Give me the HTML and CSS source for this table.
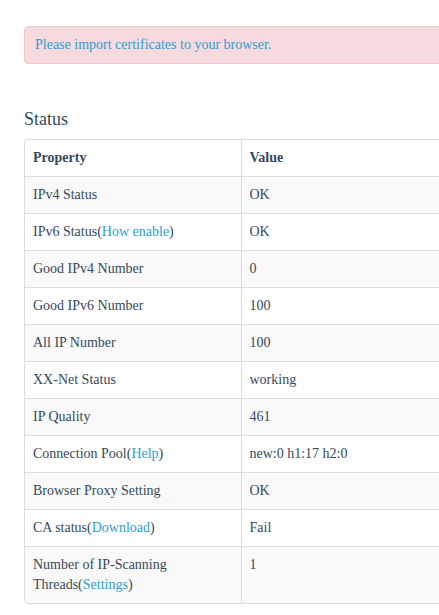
FILE: index.html
```html
<!DOCTYPE html>
<html>
<head>
<meta charset="utf-8">
<link rel="stylesheet" href="styles.css">
</head>
<body>
<div class="page">
  <div class="alert">Please import certificates to your browser.</div>
  <h2 class="title">Status</h2>
  <div class="table-wrap">
    <table class="status">
      <thead>
        <tr><th>Property</th><th>Value</th></tr>
      </thead>
      <tbody>
        <tr><td>IPv4 Status</td><td>OK</td></tr>
        <tr><td>IPv6 Status(<a href="#">How enable</a>)</td><td>OK</td></tr>
        <tr><td>Good IPv4 Number</td><td>0</td></tr>
        <tr><td>Good IPv6 Number</td><td>100</td></tr>
        <tr><td>All IP Number</td><td>100</td></tr>
        <tr><td>XX-Net Status</td><td>working</td></tr>
        <tr><td>IP Quality</td><td>461</td></tr>
        <tr><td>Connection Pool(<a href="#">Help</a>)</td><td>new:0 h1:17 h2:0</td></tr>
        <tr><td>Browser Proxy Setting</td><td>OK</td></tr>
        <tr><td>CA status(<a href="#">Download</a>)</td><td>Fail</td></tr>
        <tr><td>Number of IP-Scanning Threads(<a href="#">Settings</a>)</td><td>1</td></tr>
      </tbody>
    </table>
  </div>
</div>
</body>
</html>
```
FILE: styles.css
```css
html { overflow: hidden; }
body {
  margin: 0;
  font-family: "Liberation Serif", "Times New Roman", serif;
  font-size: 14px;
  line-height: 20px;
  color: #34495e;
  background: #fff;
}
.page {
  padding: 26px 0 0 24px;
  width: 434px;
}
.alert {
  background: #f7dadd;
  border: 1px solid #f3c8cd;
  border-radius: 4px;
  padding: 8px 10px;
  color: #2a9fd6;
}
.title {
  font-weight: normal;
  font-size: 18px;
  line-height: 22px;
  margin: 44px 0 9px 0;
  color: #34495e;
}
.table-wrap {
  border: 1px solid #dddddd;
  border-radius: 4px;
  overflow: hidden;
}
.status {
  width: 100%;
  border-collapse: collapse;
  table-layout: fixed;
}
.status th, .status td {
  text-align: left;
  vertical-align: top;
  padding: 8px 8px;
  border-top: 1px solid #dddddd;
  border-left: 1px solid #dddddd;
}
.status th:first-child, .status td:first-child { border-left: none; }
.status thead th { border-top: none; font-weight: bold; }
.status tbody tr:nth-child(odd) { background: #f9f9f9; }
.status a { color: #2a9fd6; text-decoration: none; }
```
